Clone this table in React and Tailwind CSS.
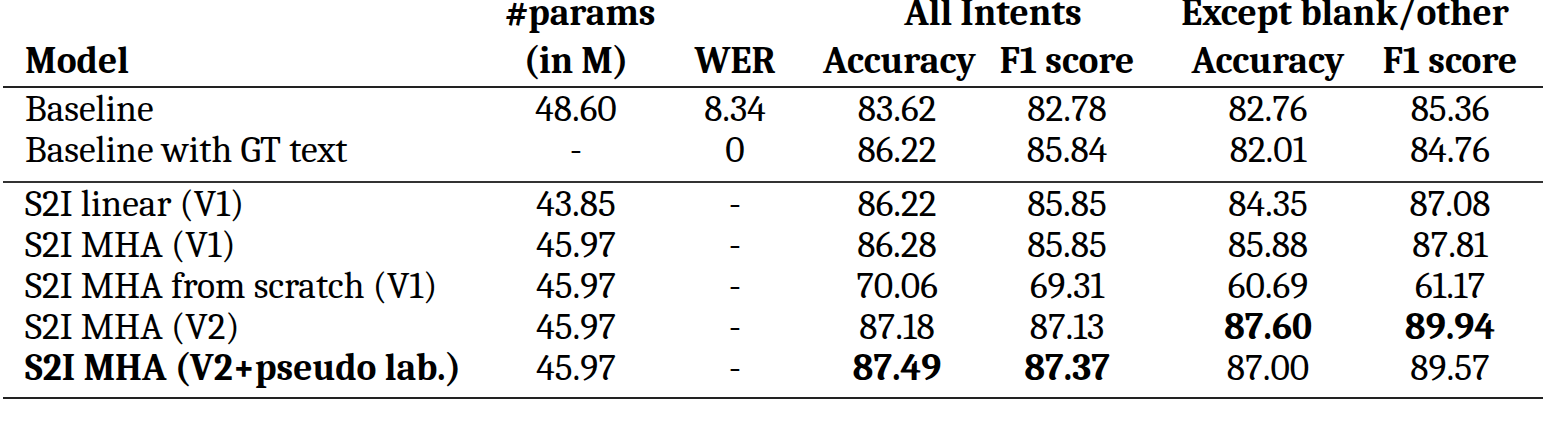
const cols = 'grid grid-cols-[502px_142px_176px_148px_192px_210px_154px]';

const rows = [
  { model: 'Baseline', params: '48.60', wer: '8.34', acc: '83.62', f1: '82.78', acc2: '82.76', f12: '85.36' },
  { model: 'Baseline with GT text', params: '-', wer: '0', acc: '86.22', f1: '85.84', acc2: '82.01', f12: '84.76' },
];

const rows2 = [
  { model: 'S2I linear (V1)', params: '43.85', wer: '-', acc: '86.22', f1: '85.85', acc2: '84.35', f12: '87.08' },
  { model: 'S2I MHA (V1)', params: '45.97', wer: '-', acc: '86.28', f1: '85.85', acc2: '85.88', f12: '87.81' },
  { model: 'S2I MHA from scratch (V1)', params: '45.97', wer: '-', acc: '70.06', f1: '69.31', acc2: '60.69', f12: '61.17' },
  { model: 'S2I MHA (V2)', params: '45.97', wer: '-', acc: '87.18', f1: '87.13', acc2: '87.60', f12: '89.94', bold: ['acc2', 'f12'] },
  { model: 'S2I MHA (V2+pseudo lab.)', params: '45.97', wer: '-', acc: '87.49', f1: '87.37', acc2: '87.00', f12: '89.57', bold: ['model', 'acc', 'f1'] },
];

const Row = ({ r }) => {
  const b = (k) => (r.bold && r.bold.includes(k) ? 'font-bold' : '');
  return (
    <div className={`${cols} h-[41px]`}>
      <div className={`pl-[22px] whitespace-nowrap ${b('model')}`}>{r.model}</div>
      <div className={`text-center ${b('params')}`}>{r.params}</div>
      <div className="text-center">{r.wer}</div>
      <div className={`text-center ${b('acc')}`}>{r.acc}</div>
      <div className={`text-center ${b('f1')}`}>{r.f1}</div>
      <div className={`text-center ${b('acc2')}`}>{r.acc2}</div>
      <div className={`text-center ${b('f12')}`}>{r.f12}</div>
    </div>
  );
};

export default function App() {
  return (
    <div className="w-[1547px] h-[423px] overflow-hidden bg-white text-black font-serif">
      <div className="ml-[3px] w-[1540px] text-[37.5px] leading-[41px]">
        {/* header */}
        <div className={`${cols} font-bold h-[40px] leading-[26px] whitespace-nowrap`}>
          <div></div>
          <div className="text-center">#params</div>
          <div></div>
          <div className="col-span-2 text-center">All Intents</div>
          <div className="col-span-2 text-center">Except blank/other</div>
        </div>
        <div className={`${cols} font-bold h-[41px] whitespace-nowrap`}>
          <div className="pl-[22px]">Model</div>
          <div className="text-center">(in M)</div>
          <div className="text-center">WER</div>
          <div className="text-center">Accuracy</div>
          <div className="text-center">F1 score</div>
          <div className="text-center">Accuracy</div>
          <div className="text-center">F1 score</div>
        </div>
        <div className="mt-[5px] h-[2px] bg-[#222]"></div>

        {rows.map((r) => (
          <Row key={r.model} r={r} />
        ))}
        <div className="mt-[11px] h-[2px] bg-[#333]"></div>

        {rows2.map((r) => (
          <Row key={r.model} r={r} />
        ))}
        <div className="mt-[9px] h-[2px] bg-[#222]"></div>
      </div>
    </div>
  );
}
